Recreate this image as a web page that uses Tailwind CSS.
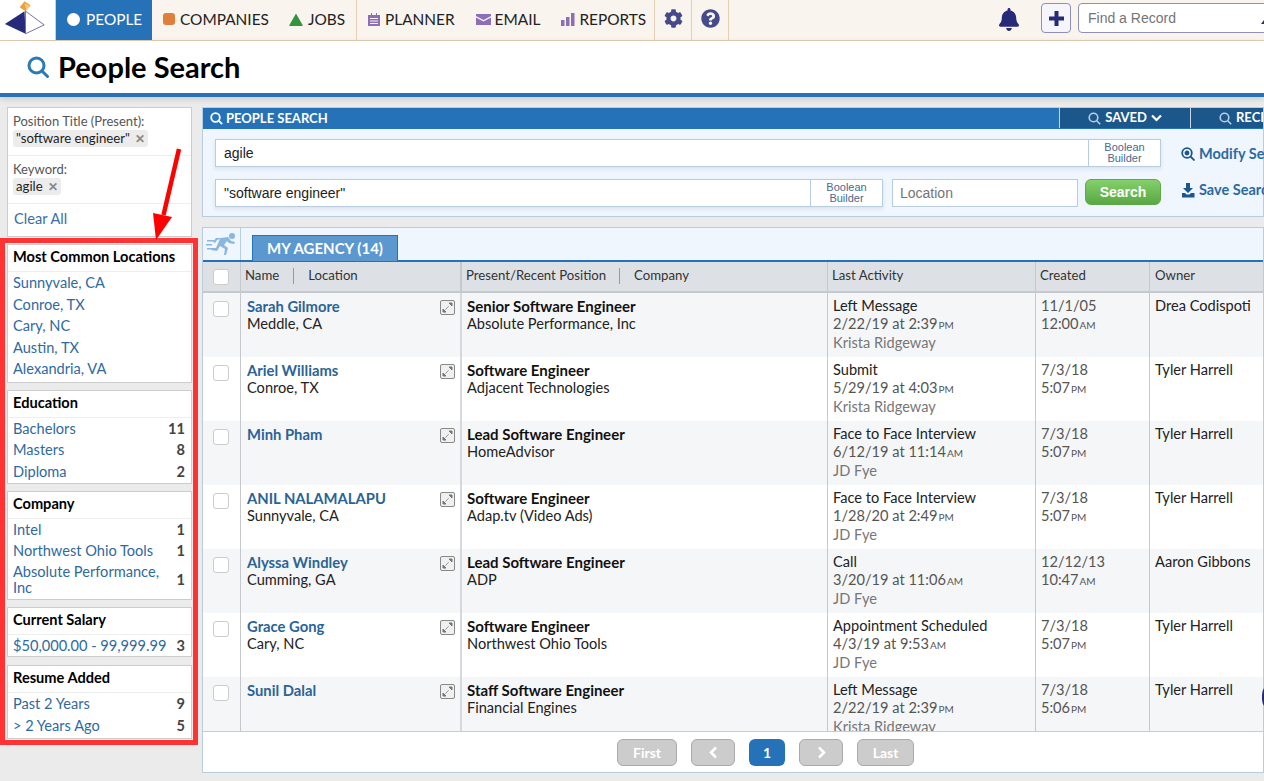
<!DOCTYPE html>
<html>
<head>
<meta charset="utf-8">
<script src="https://cdn.jsdelivr.net/npm/@tailwindcss/browser@4"></script>
</head>
<body class="w-[1264px] h-[781px] overflow-hidden relative bg-[#ebebeb] font-['Lato','Open_Sans',sans-serif] text-[14.6px] text-[#333]">

<!-- top nav -->
<header class="h-[41px] flex bg-[#f9f4ee] border-b border-[#e3cfb3] text-[#222] text-[15.4px]">
  <div class="w-[56px] shrink-0 bg-white border-r border-[#e3cfb3] flex items-center justify-center">
    <svg width="56" height="40" viewBox="0 0 56 40"><path d="M20 7 25 1 31 5 26 11z" fill="#e8a33d"/><path d="M25 3l2 7 4-4z" fill="#f4c97a"/><path d="M25 11 5 24 26 34z" fill="#272a78"/><path d="M26 11l19 14-19 9z" fill="#fff" stroke="#4b4e96" stroke-width=".8"/></svg>
  </div>
  <a class="w-[96px] shrink-0 h-[40px] bg-[#2672b8] text-white flex items-center gap-[6px] pl-[11px] pb-[1px]"><span class="w-[13px] h-[13px] rounded-full bg-white"></span>PEOPLE</a>
  <nav class="flex items-center w-[205px] shrink-0 pl-[11px] gap-[20px] border-r border-[#e3cfb3] pb-[1px]">
    <a class="flex items-center gap-[5px]"><span class="w-[12px] h-[12px] rounded-[3px] bg-[#e07f3c]"></span>COMPANIES</a>
    <a class="flex items-center gap-[5px]"><svg width="14" height="13" viewBox="0 0 14 13"><path d="M7 0.500 13.600 12a.6.6 0 0 1-.5.9H.9a.6.6 0 0 1-.5-.9z" fill="#33963f"/></svg>JOBS</a>
  </nav>
  <nav class="flex items-center w-[298px] shrink-0 pl-[11px] gap-[21px] border-r border-[#e3cfb3] pb-[1px]">
    <a class="flex items-center gap-[5px]"><svg width="12" height="13" viewBox="0 0 12 13"><path d="M0 2h3V0h1v2h4V0h1v2h3v11H0zM2 5v1h8V5zm0 2.500v1h8v-1zM2 10v1h8v-1z" fill="#8d6fb5" fill-rule="evenodd"/></svg>PLANNER</a>
    <a class="flex items-center gap-[4px]"><svg width="15" height="11" viewBox="0 0 15 11"><path d="M0 0h15v2L7.500 6 0 2zM0 3.500l7.500 4 7.500-4V11H0z" fill="#8d6fb5"/></svg>EMAIL</a>
    <a class="flex items-center gap-[4px]"><svg width="14" height="13" viewBox="0 0 14 13"><path d="M0 7h3.500v6H0zM5 4h3.500v9H5zM10 0h3.500v13H10z" fill="#8d6fb5"/></svg>REPORTS</a>
  </nav>
  <a class="w-[37px] shrink-0 flex items-center justify-center border-r border-[#e3cfb3] pb-[3px]"><svg width="19" height="19" viewBox="0 0 512 512" fill="#474a8a"><path d="M487.4 315.7l-42.6-24.6c4.3-23.2 4.3-47 0-70.2l42.6-24.6c4.9-2.8 7.1-8.6 5.5-14-11.1-35.6-30-67.8-54.7-94.6-3.8-4.1-10-5.1-14.8-2.3L380.8 110c-17.9-15.4-38.5-27.3-60.8-35.1V25.8c0-5.6-3.9-10.5-9.4-11.7-36.7-8.2-74.3-7.8-109.2 0-5.5 1.2-9.4 6.1-9.4 11.7V75c-22.2 7.9-42.8 19.8-60.8 35.1L88.7 85.5c-4.9-2.8-11-1.9-14.8 2.3-24.7 26.7-43.6 58.9-54.7 94.6-1.7 5.4.6 11.2 5.5 14L67.3 221c-4.3 23.2-4.3 47 0 70.2l-42.6 24.6c-4.9 2.8-7.1 8.6-5.5 14 11.1 35.6 30 67.8 54.7 94.6 3.8 4.1 10 5.1 14.8 2.3l42.6-24.6c17.9 15.4 38.5 27.3 60.8 35.1v49.2c0 5.6 3.9 10.5 9.4 11.7 36.7 8.2 74.3 7.8 109.2 0 5.5-1.2 9.4-6.1 9.4-11.7v-49.2c22.2-7.9 42.8-19.8 60.8-35.1l42.6 24.6c4.9 2.8 11 1.9 14.8-2.3 24.7-26.7 43.6-58.9 54.7-94.6 1.5-5.5-.7-11.3-5.6-14.1zM256 336c-44.1 0-80-35.9-80-80s35.9-80 80-80 80 35.9 80 80-35.9 80-80 80z"/></svg></a>
  <a class="w-[37px] shrink-0 flex items-center justify-center border-r border-[#e3cfb3] pb-[3px]"><svg width="19" height="19" viewBox="0 0 512 512" fill="#474a8a"><path d="M504 256c0 136.997-111.043 248-248 248S8 392.997 8 256C8 119.083 119.043 8 256 8s248 111.083 248 248zM262.655 90c-54.497 0-89.255 22.957-116.549 63.758-3.536 5.286-2.353 12.415 2.715 16.258l34.699 26.31c5.205 3.947 12.621 3.008 16.665-2.122 17.864-22.658 30.113-35.797 57.303-35.797 20.429 0 45.698 13.148 45.698 32.958 0 14.976-12.363 22.667-32.534 33.976C247.128 238.528 216 254.941 216 296v4c0 6.627 5.373 12 12 12h56c6.627 0 12-5.373 12-12v-1.333c0-28.462 83.186-29.647 83.186-106.667 0-58.002-60.165-102-116.531-102zM256 338c-25.365 0-46 20.635-46 46 0 25.364 20.635 46 46 46s46-20.636 46-46c0-25.365-20.635-46-46-46z"/></svg></a>
  <div class="ml-[264px] w-[32px] shrink-0 flex items-center justify-center pb-[1px]"><svg width="20" height="23" viewBox="0 0 448 512" fill="#272a78"><path d="M224 512c35.320 0 63.970-28.650 63.970-64H160.030c0 35.350 28.650 64 63.970 64zm215.390-149.710c-19.320-20.760-55.470-51.990-55.470-154.290 0-77.700-54.480-139.900-127.940-155.160V32c0-17.670-14.320-32-31.980-32s-31.980 14.330-31.980 32v20.840C118.560 68.100 64.080 130.300 64.080 208c0 102.300-36.150 133.530-55.470 154.290-6 6.450-8.660 14.160-8.610 21.710.11 16.400 12.980 32 32.100 32h383.800c19.120 0 32-15.600 32.100-32 .05-7.550-2.610-15.270-8.610-21.710z"/></svg></div>
  <div class="ml-[16px] mt-[3px] w-[30px] h-[30px] shrink-0 rounded-[4px] border border-[#8f8fba] bg-[#f5f5fb] flex items-center justify-center"><svg width="15" height="15" viewBox="0 0 15 15"><path d="M5.500 0h4v5.500H15v4H9.500V15h-4V9.500H0v-4h5.500z" fill="#272a78"/></svg></div>
  <div class="ml-[7px] mt-[3px] w-[200px] h-[30px] shrink-0 rounded-[4px] border border-[#8f8fba] bg-white pl-[9px] flex items-center font-['Liberation_Sans',sans-serif] text-[14px] text-[#757575]"><span class="shrink-0">Find a Record</span><svg class="ml-[85px] mt-[8px] shrink-0" width="6" height="6" viewBox="0 0 6 6"><path d="M0 5 3 1l3 4z" fill="#272a78"/></svg></div>
</header>

<!-- page title -->
<div class="h-[56px] bg-white border-b-4 border-[#2672b8] flex items-center pl-[27px] gap-[9px] pb-[1px] shadow-[0_2px_6px_rgba(0,0,0,0.15)]">
  <svg width="22" height="22" viewBox="0 0 22 22" fill="none" stroke="#2a7ab8" stroke-width="3"><circle cx="9.500" cy="9.500" r="7.500"/><path d="M15 15l5.500 5.500" stroke-linecap="round"/></svg>
  <h1 class="text-[29px] font-bold text-black leading-none">People Search</h1>
</div>

<main class="flex items-start pt-[10px] pl-[7px] gap-[10px]">
  <!-- left rail -->
  <aside class="w-[185px] shrink-0 flex flex-col gap-[7px]">
    <section class="bg-white border border-[#ccc] h-[130px]">
      <div class="h-[48px] border-b border-[#eee] pl-[5px] pt-[5px]">
        <p class="text-[#555] text-[13px] leading-[16px]">Position Title (Present):</p>
        <span class="mt-[1px] flex w-fit items-center gap-[5px] h-[17px] px-[3px] rounded-[3px] bg-[#ececec] text-[#222] text-[13.200px]">"software engineer"<span class="text-[#888] font-bold text-[12px]">✕</span></span>
      </div>
      <div class="h-[48px] border-b border-[#eee] pl-[5px] pt-[5px]">
        <p class="text-[#555] text-[13px] leading-[16px]">Keyword:</p>
        <span class="mt-[1px] flex w-fit items-center gap-[5px] h-[17px] px-[3px] rounded-[3px] bg-[#ececec] text-[#222] text-[13.200px]">agile<span class="text-[#888] font-bold text-[12px]">✕</span></span>
      </div>
      <a class="block pl-[6px] pt-[4px] text-[#3a6ea5]">Clear All</a>
    </section>

    <section class="bg-white border border-[#ccc] pb-[2px]">
      <h3 class="h-[27px] pl-[5px] pb-[2px] flex items-center font-bold text-black border-b border-[#eee]">Most Common Locations</h3>
      <ul class="text-[#2f6a9f] leading-[21.500px]">
        <li class="pl-[5px]">Sunnyvale, CA</li>
        <li class="pl-[5px]">Conroe, TX</li>
        <li class="pl-[5px]">Cary, NC</li>
        <li class="pl-[5px]">Austin, TX</li>
        <li class="pl-[5px]">Alexandria, VA</li>
      </ul>
    </section>

    <section class="bg-white border border-[#ccc]">
      <h3 class="h-[27px] pl-[5px] pb-[2px] flex items-center font-bold text-black border-b border-[#eee]">Education</h3>
      <ul class="leading-[21.700px]">
        <li class="flex justify-between pl-[5px] pr-[6px]"><span class="text-[#2f6a9f]">Bachelors</span><b class="text-[#444]">11</b></li>
        <li class="flex justify-between pl-[5px] pr-[6px]"><span class="text-[#2f6a9f]">Masters</span><b class="text-[#444]">8</b></li>
        <li class="flex justify-between pl-[5px] pr-[6px]"><span class="text-[#2f6a9f]">Diploma</span><b class="text-[#444]">2</b></li>
      </ul>
    </section>

    <section class="bg-white border border-[#ccc]">
      <h3 class="h-[27px] pl-[5px] pb-[2px] flex items-center font-bold text-black border-b border-[#eee]">Company</h3>
      <ul class="leading-[21.700px] pb-[1px]">
        <li class="flex justify-between pl-[5px] pr-[6px]"><span class="text-[#2f6a9f]">Intel</span><b class="text-[#444]">1</b></li>
        <li class="flex justify-between pl-[5px] pr-[6px]"><span class="text-[#2f6a9f]">Northwest Ohio Tools</span><b class="text-[#444]">1</b></li>
        <li class="flex justify-between items-center pl-[5px] pr-[6px] py-[2px]"><span class="text-[#2f6a9f] leading-[16px] w-[155px]">Absolute Performance, Inc</span><b class="text-[#444]">1</b></li>
      </ul>
    </section>

    <section class="bg-white border border-[#ccc]">
      <h3 class="h-[27px] pl-[5px] pb-[2px] flex items-center font-bold text-black border-b border-[#eee]">Current Salary</h3>
      <ul class="leading-[21px]">
        <li class="flex justify-between pl-[5px] pr-[6px]"><span class="text-[#2f6a9f]">$50,000.00 - 99,999.99</span><b class="text-[#444]">3</b></li>
      </ul>
    </section>

    <section class="bg-white border border-[#ccc] mt-[1px] pb-[2px]">
      <h3 class="h-[27px] pl-[5px] pb-[2px] flex items-center font-bold text-black border-b border-[#eee]">Resume Added</h3>
      <ul class="leading-[21.700px]">
        <li class="flex justify-between pl-[5px] pr-[6px]"><span class="text-[#2f6a9f]">Past 2 Years</span><b class="text-[#444]">9</b></li>
        <li class="flex justify-between pl-[5px] pr-[6px]"><span class="text-[#2f6a9f]">&gt; 2 Years Ago</span><b class="text-[#444]">5</b></li>
      </ul>
    </section>
  </aside>

  <!-- main column -->
  <div class="w-[1062px] shrink-0 flex flex-col gap-[10px]">
    <!-- search panel -->
    <section class="h-[110px] bg-[#eff6fd] border border-[#b9cde0]">
      <div class="h-[21px] bg-[#2672b8] flex text-white text-[13px] font-bold">
        <div class="w-[856px] flex items-center gap-[3px] pl-[7px]">
          <svg width="13" height="13" viewBox="0 0 13 13" fill="none" stroke="#fff" stroke-width="1.800"><circle cx="5.500" cy="5.500" r="4.300"/><path d="M8.700 8.700l3.500 3.500"/></svg>PEOPLE SEARCH
        </div>
        <div class="w-[131px] h-[20px] bg-[#1c578c] border-l border-[#c5d7e8] flex items-center justify-center gap-[4px]">
          <svg width="13" height="13" viewBox="0 0 13 13" fill="none" stroke="#b8cfe4" stroke-width="1.600"><circle cx="5.500" cy="5.500" r="4.300"/><path d="M8.700 8.700l3.500 3.500"/></svg>SAVED
          <svg width="11" height="8" viewBox="0 0 11 8" fill="none" stroke="#fff" stroke-width="2.200"><path d="M1 1.500l4.500 4.500L10 1.500"/></svg>
        </div>
        <div class="flex-1 h-[20px] bg-[#1c578c] border-l border-[#c5d7e8] flex items-center gap-[4px] pl-[28px] overflow-hidden">
          <svg class="shrink-0" width="13" height="13" viewBox="0 0 13 13" fill="none" stroke="#b8cfe4" stroke-width="1.600"><circle cx="5.500" cy="5.500" r="4.300"/><path d="M8.700 8.700l3.500 3.500"/></svg>RECENT
        </div>
      </div>
      <div class="flex pl-[12px] pt-[10px]">
        <div class="w-[946px] shrink-0 flex flex-col gap-[12px]">
          <div class="flex h-[28px] bg-white border border-[#b9cde0] shadow-[0_2px_4px_rgba(80,120,170,0.15)] font-['Liberation_Sans',sans-serif]">
            <div class="flex-1 pl-[8px] flex items-center text-[14px] text-[#222]">agile</div>
            <div class="w-[72px] border-l border-[#b9cde0] flex items-center justify-center text-center text-[11px] leading-[11px] text-[#4a6a90]">Boolean<br>Builder</div>
          </div>
          <div class="flex items-start">
            <div class="flex w-[668px] h-[28px] bg-white border border-[#b9cde0] shadow-[0_2px_4px_rgba(80,120,170,0.15)] font-['Liberation_Sans',sans-serif]">
              <div class="flex-1 pl-[8px] flex items-center text-[14px] text-[#222]">"software engineer"</div>
              <div class="w-[72px] border-l border-[#b9cde0] flex items-center justify-center text-center text-[11px] leading-[11px] text-[#4a6a90]">Boolean<br>Builder</div>
            </div>
            <div class="ml-[9px] w-[186px] h-[28px] bg-white border border-[#b9cde0] pl-[7px] flex items-center font-['Liberation_Sans',sans-serif] text-[14px] text-[#757575]">Location</div>
            <div class="ml-[7px] w-[76px] h-[26px] rounded-[6px] border border-[#5fa84a] bg-gradient-to-b from-[#84d06a] to-[#5aa844] flex items-center justify-center text-white font-bold text-[14px] font-['Liberation_Sans',sans-serif]">Search</div>
          </div>
        </div>
        <div class="ml-[20px] flex flex-col gap-[16px] pt-[5px] text-[#2c6aa0] font-bold text-[14.500px] leading-[20px] whitespace-nowrap">
          <a class="flex items-center gap-[4px]"><svg width="14" height="14" viewBox="0 0 14 14" fill="none" stroke="#1c578c" stroke-width="1.800"><circle cx="6" cy="6" r="4.800"/><circle cx="6" cy="6" r="1.500" fill="#1c578c"/><path d="M9.500 9.500l4 4"/></svg>Modify Search</a>
          <a class="flex items-center gap-[4px]"><svg width="14" height="15" viewBox="0 0 14 15"><path d="M5 0h4v5h3L7 10 2 5h3zM1 10h3l1.500 1.500h3L10 10h3.500v4.500H1z" fill="#1c578c"/></svg>Save Search</a>
        </div>
      </div>
    </section>

    <!-- results panel -->
    <section class="h-[546px] bg-white border border-[#b9cde0] flex flex-col">
      <div class="h-[34px] shrink-0 bg-[#eff6fd] flex border-b-2 border-[#2672b8]">
        <div class="w-[38px] border-r border-[#b9cde0] flex items-center justify-center">
          <svg width="32" height="24" viewBox="0 0 32 24" fill="#8ab6e0"><circle cx="26" cy="4" r="3"/><path d="M15 6l7-1 3 4 4 1-1 2-5-1-2-2-3 4 4 3-2 7h-2l1-6-5-3-3 5-6-1 1-2 4 0 4-9-3 1-2 3-2-1 3-4z"/><path d="M1 8h7v1.500H1zM0 12h6v1.500H0zM1 16h5v1.500H1z"/></svg>
        </div>
        <div class="ml-[11px] mt-[7px] w-[146px] h-[26px] bg-[#5b98d0] border border-b-0 border-[#2672b8] text-white text-[15px] font-bold flex items-center justify-center">MY AGENCY (14)</div>
      </div>
      <div class="grid grid-cols-[38px_221px_366px_208px_114px_1fr] h-[31px] shrink-0 bg-[#dde1e5] border-b-2 border-[#c5c8cc] text-[13.200px] text-[#333]">
        <div class="flex items-center pl-[10px] border-r border-[#c5c8cc]"><span class="w-[16px] h-[16px] bg-white border border-[#ccc] rounded-[3px]"></span></div>
        <div class="flex items-center pl-[4px] pb-[1px] border-r-2 border-[#c5c8cc]"><span>Name</span><span class="ml-[14px] h-[16px] border-l border-[#999]"></span><span class="ml-[14px]">Location</span></div>
        <div class="flex items-center pl-[4px] pb-[1px] border-r border-[#c5c8cc]"><span>Present/Recent Position</span><span class="ml-[13px] h-[16px] border-l border-[#999]"></span><span class="ml-[14px]">Company</span></div>
        <div class="flex items-center pl-[4px] pb-[1px] border-r border-[#c5c8cc]">Last Activity</div>
        <div class="flex items-center pl-[4px] pb-[1px] border-r border-[#c5c8cc]">Created</div>
        <div class="flex items-center pl-[5px] pb-[1px]">Owner</div>
      </div>
      <div class="flex-1 overflow-hidden">

        <!-- row 1 -->
        <div class="grid grid-cols-[38px_221px_366px_208px_114px_1fr] h-[64px] bg-[#f5f6f8] leading-[18px] text-[#222]">
          <div class="pl-[10px] pt-[8px] border-r border-[#c5c8cc]"><span class="block w-[16px] h-[16px] bg-white border border-[#ccc] rounded-[3px]"></span></div>
          <div class="relative pl-[6px] pt-[4px] border-r-2 border-[#d5d8dc]"><p class="font-bold text-[14.800px] text-[#2a6496]">Sarah Gilmore</p><p>Meddle, CA</p><svg class="absolute top-[7px] right-[5px]" width="15" height="15" viewBox="0 0 15 15"><rect x=".5" y=".5" width="14" height="14" rx="1.500" fill="#f0f0f0" stroke="#888"/><path d="M9 3h3v3zM3 9v3h3zM5.500 9.500l1-1 1-1 1-1" stroke="#777" fill="#777"/></svg></div>
          <div class="pl-[5px] pt-[4px] border-r border-[#c5c8cc]"><p class="font-bold text-[15px] text-[#111]">Senior Software Engineer</p><p>Absolute Performance, Inc</p></div>
          <div class="pl-[5px] pt-[4px] border-r border-[#c5c8cc]"><p>Left Message</p><p class="text-[#555]">2/22/19 at 2:39<span class="text-[10px] ml-[1px]">PM</span></p><p class="text-[#777]">Krista Ridgeway</p></div>
          <div class="pl-[5px] pt-[4px] border-r border-[#c5c8cc] text-[#555]"><p>11/1/05</p><p>12:00<span class="text-[10px] ml-[1px]">AM</span></p></div>
          <div class="pl-[5px] pt-[4px]">Drea Codispoti</div>
        </div>
        <!-- row 2 -->
        <div class="grid grid-cols-[38px_221px_366px_208px_114px_1fr] h-[64px] bg-white leading-[18px] text-[#222]">
          <div class="pl-[10px] pt-[8px] border-r border-[#c5c8cc]"><span class="block w-[16px] h-[16px] bg-white border border-[#ccc] rounded-[3px]"></span></div>
          <div class="relative pl-[6px] pt-[4px] border-r-2 border-[#d5d8dc]"><p class="font-bold text-[14.800px] text-[#2a6496]">Ariel Williams</p><p>Conroe, TX</p><svg class="absolute top-[7px] right-[5px]" width="15" height="15" viewBox="0 0 15 15"><rect x=".5" y=".5" width="14" height="14" rx="1.500" fill="#f0f0f0" stroke="#888"/><path d="M9 3h3v3zM3 9v3h3zM5.500 9.500l1-1 1-1 1-1" stroke="#777" fill="#777"/></svg></div>
          <div class="pl-[5px] pt-[4px] border-r border-[#c5c8cc]"><p class="font-bold text-[15px] text-[#111]">Software Engineer</p><p>Adjacent Technologies</p></div>
          <div class="pl-[5px] pt-[4px] border-r border-[#c5c8cc]"><p>Submit</p><p class="text-[#555]">5/29/19 at 4:03<span class="text-[10px] ml-[1px]">PM</span></p><p class="text-[#777]">Krista Ridgeway</p></div>
          <div class="pl-[5px] pt-[4px] border-r border-[#c5c8cc] text-[#555]"><p>7/3/18</p><p>5:07<span class="text-[10px] ml-[1px]">PM</span></p></div>
          <div class="pl-[5px] pt-[4px]">Tyler Harrell</div>
        </div>
        <!-- row 3 -->
        <div class="grid grid-cols-[38px_221px_366px_208px_114px_1fr] h-[64px] bg-[#f5f6f8] leading-[18px] text-[#222]">
          <div class="pl-[10px] pt-[8px] border-r border-[#c5c8cc]"><span class="block w-[16px] h-[16px] bg-white border border-[#ccc] rounded-[3px]"></span></div>
          <div class="relative pl-[6px] pt-[4px] border-r-2 border-[#d5d8dc]"><p class="font-bold text-[14.800px] text-[#2a6496]">Minh Pham</p><svg class="absolute top-[7px] right-[5px]" width="15" height="15" viewBox="0 0 15 15"><rect x=".5" y=".5" width="14" height="14" rx="1.500" fill="#f0f0f0" stroke="#888"/><path d="M9 3h3v3zM3 9v3h3zM5.500 9.500l1-1 1-1 1-1" stroke="#777" fill="#777"/></svg></div>
          <div class="pl-[5px] pt-[4px] border-r border-[#c5c8cc]"><p class="font-bold text-[15px] text-[#111]">Lead Software Engineer</p><p>HomeAdvisor</p></div>
          <div class="pl-[5px] pt-[4px] border-r border-[#c5c8cc]"><p>Face to Face Interview</p><p class="text-[#555]">6/12/19 at 11:14<span class="text-[10px] ml-[1px]">AM</span></p><p class="text-[#777]">JD Fye</p></div>
          <div class="pl-[5px] pt-[4px] border-r border-[#c5c8cc] text-[#555]"><p>7/3/18</p><p>5:07<span class="text-[10px] ml-[1px]">PM</span></p></div>
          <div class="pl-[5px] pt-[4px]">Tyler Harrell</div>
        </div>
        <!-- row 4 -->
        <div class="grid grid-cols-[38px_221px_366px_208px_114px_1fr] h-[64px] bg-white leading-[18px] text-[#222]">
          <div class="pl-[10px] pt-[8px] border-r border-[#c5c8cc]"><span class="block w-[16px] h-[16px] bg-white border border-[#ccc] rounded-[3px]"></span></div>
          <div class="relative pl-[6px] pt-[4px] border-r-2 border-[#d5d8dc]"><p class="font-bold text-[14.800px] text-[#2a6496]">ANIL NALAMALAPU</p><p>Sunnyvale, CA</p><svg class="absolute top-[7px] right-[5px]" width="15" height="15" viewBox="0 0 15 15"><rect x=".5" y=".5" width="14" height="14" rx="1.500" fill="#f0f0f0" stroke="#888"/><path d="M9 3h3v3zM3 9v3h3zM5.500 9.500l1-1 1-1 1-1" stroke="#777" fill="#777"/></svg></div>
          <div class="pl-[5px] pt-[4px] border-r border-[#c5c8cc]"><p class="font-bold text-[15px] text-[#111]">Software Engineer</p><p>Adap.tv (Video Ads)</p></div>
          <div class="pl-[5px] pt-[4px] border-r border-[#c5c8cc]"><p>Face to Face Interview</p><p class="text-[#555]">1/28/20 at 2:49<span class="text-[10px] ml-[1px]">PM</span></p><p class="text-[#777]">JD Fye</p></div>
          <div class="pl-[5px] pt-[4px] border-r border-[#c5c8cc] text-[#555]"><p>7/3/18</p><p>5:07<span class="text-[10px] ml-[1px]">PM</span></p></div>
          <div class="pl-[5px] pt-[4px]">Tyler Harrell</div>
        </div>
        <!-- row 5 -->
        <div class="grid grid-cols-[38px_221px_366px_208px_114px_1fr] h-[64px] bg-[#f5f6f8] leading-[18px] text-[#222]">
          <div class="pl-[10px] pt-[8px] border-r border-[#c5c8cc]"><span class="block w-[16px] h-[16px] bg-white border border-[#ccc] rounded-[3px]"></span></div>
          <div class="relative pl-[6px] pt-[4px] border-r-2 border-[#d5d8dc]"><p class="font-bold text-[14.800px] text-[#2a6496]">Alyssa Windley</p><p>Cumming, GA</p><svg class="absolute top-[7px] right-[5px]" width="15" height="15" viewBox="0 0 15 15"><rect x=".5" y=".5" width="14" height="14" rx="1.500" fill="#f0f0f0" stroke="#888"/><path d="M9 3h3v3zM3 9v3h3zM5.500 9.500l1-1 1-1 1-1" stroke="#777" fill="#777"/></svg></div>
          <div class="pl-[5px] pt-[4px] border-r border-[#c5c8cc]"><p class="font-bold text-[15px] text-[#111]">Lead Software Engineer</p><p>ADP</p></div>
          <div class="pl-[5px] pt-[4px] border-r border-[#c5c8cc]"><p>Call</p><p class="text-[#555]">3/20/19 at 11:06<span class="text-[10px] ml-[1px]">AM</span></p><p class="text-[#777]">JD Fye</p></div>
          <div class="pl-[5px] pt-[4px] border-r border-[#c5c8cc] text-[#555]"><p>12/12/13</p><p>10:47<span class="text-[10px] ml-[1px]">AM</span></p></div>
          <div class="pl-[5px] pt-[4px]">Aaron Gibbons</div>
        </div>
        <!-- row 6 -->
        <div class="grid grid-cols-[38px_221px_366px_208px_114px_1fr] h-[64px] bg-white leading-[18px] text-[#222]">
          <div class="pl-[10px] pt-[8px] border-r border-[#c5c8cc]"><span class="block w-[16px] h-[16px] bg-white border border-[#ccc] rounded-[3px]"></span></div>
          <div class="relative pl-[6px] pt-[4px] border-r-2 border-[#d5d8dc]"><p class="font-bold text-[14.800px] text-[#2a6496]">Grace Gong</p><p>Cary, NC</p><svg class="absolute top-[7px] right-[5px]" width="15" height="15" viewBox="0 0 15 15"><rect x=".5" y=".5" width="14" height="14" rx="1.500" fill="#f0f0f0" stroke="#888"/><path d="M9 3h3v3zM3 9v3h3zM5.500 9.500l1-1 1-1 1-1" stroke="#777" fill="#777"/></svg></div>
          <div class="pl-[5px] pt-[4px] border-r border-[#c5c8cc]"><p class="font-bold text-[15px] text-[#111]">Software Engineer</p><p>Northwest Ohio Tools</p></div>
          <div class="pl-[5px] pt-[4px] border-r border-[#c5c8cc]"><p>Appointment Scheduled</p><p class="text-[#555]">4/3/19 at 9:53<span class="text-[10px] ml-[1px]">AM</span></p><p class="text-[#777]">JD Fye</p></div>
          <div class="pl-[5px] pt-[4px] border-r border-[#c5c8cc] text-[#555]"><p>7/3/18</p><p>5:07<span class="text-[10px] ml-[1px]">PM</span></p></div>
          <div class="pl-[5px] pt-[4px]">Tyler Harrell</div>
        </div>
        <!-- row 7 -->
        <div class="grid grid-cols-[38px_221px_366px_208px_114px_1fr] h-[64px] bg-[#f5f6f8] leading-[18px] text-[#222]">
          <div class="pl-[10px] pt-[8px] border-r border-[#c5c8cc]"><span class="block w-[16px] h-[16px] bg-white border border-[#ccc] rounded-[3px]"></span></div>
          <div class="relative pl-[6px] pt-[4px] border-r-2 border-[#d5d8dc]"><p class="font-bold text-[14.800px] text-[#2a6496]">Sunil Dalal</p><svg class="absolute top-[7px] right-[5px]" width="15" height="15" viewBox="0 0 15 15"><rect x=".5" y=".5" width="14" height="14" rx="1.500" fill="#f0f0f0" stroke="#888"/><path d="M9 3h3v3zM3 9v3h3zM5.500 9.500l1-1 1-1 1-1" stroke="#777" fill="#777"/></svg></div>
          <div class="pl-[5px] pt-[4px] border-r border-[#c5c8cc]"><p class="font-bold text-[15px] text-[#111]">Staff Software Engineer</p><p>Financial Engines</p></div>
          <div class="pl-[5px] pt-[4px] border-r border-[#c5c8cc]"><p>Left Message</p><p class="text-[#555]">2/22/19 at 2:39<span class="text-[10px] ml-[1px]">PM</span></p><p class="text-[#777]">Krista Ridgeway</p></div>
          <div class="pl-[5px] pt-[4px] border-r border-[#c5c8cc] text-[#555]"><p>7/3/18</p><p>5:06<span class="text-[10px] ml-[1px]">PM</span></p></div>
          <div class="pl-[5px] pt-[4px]">Tyler Harrell</div>
        </div>
      </div>
      <div class="h-[41px] shrink-0 border-t border-[#ccc] bg-white flex items-center pl-[414px] gap-[14px] text-white font-bold text-[14px]">
        <span class="w-[60px] h-[27px] rounded-[6px] bg-[#ccc] border border-[#aaa] flex items-center justify-center">First</span>
        <span class="w-[44px] h-[27px] rounded-[6px] bg-[#ccc] border border-[#aaa] flex items-center justify-center"><svg width="9" height="13" viewBox="0 0 9 13" fill="none" stroke="#fff" stroke-width="2.500"><path d="M7 1.500L2 6.500l5 5"/></svg></span>
        <span class="w-[36px] h-[27px] rounded-[6px] bg-[#2672b8] flex items-center justify-center">1</span>
        <span class="w-[44px] h-[27px] rounded-[6px] bg-[#ccc] border border-[#aaa] flex items-center justify-center"><svg width="9" height="13" viewBox="0 0 9 13" fill="none" stroke="#fff" stroke-width="2.500"><path d="M2 1.500l5 5-5 5"/></svg></span>
        <span class="w-[57px] h-[27px] rounded-[6px] bg-[#ccc] border border-[#aaa] flex items-center justify-center">Last</span>
      </div>
    </section>
  </div>
</main>

<!-- annotation overlay -->
<div class="absolute left-0 top-[238px] w-[198px] h-[507px] border-[5px] border-[#ff3333] pointer-events-none"></div>
<svg class="absolute left-[150px] top-[145px] pointer-events-none" width="35" height="100" viewBox="0 0 35 100"><path d="M29 4L13.500 70" stroke="#ff0000" stroke-width="4.500" fill="none"/><path d="M3 68L22 72 6 95z" fill="#ff0000"/></svg>
<div class="absolute left-[1262px] top-[682px] w-[26px] h-[30px] rounded-full bg-[#272a78]"></div>
</body>
</html>
